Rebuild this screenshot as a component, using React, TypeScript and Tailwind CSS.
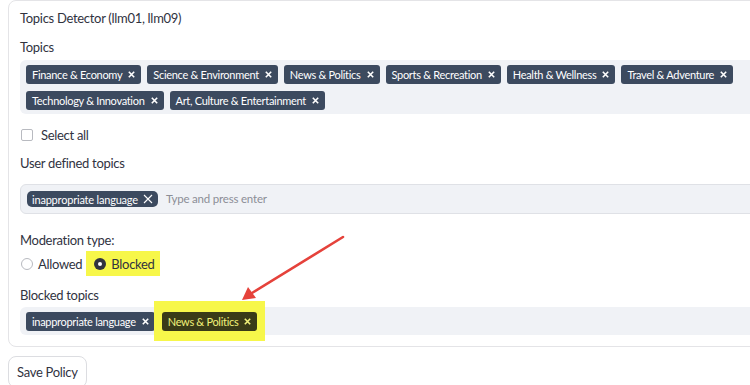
import React from "react";

const font = { fontFamily: 'Lato, "Noto Sans", sans-serif' };

function XIcon({ color }: { color: string }) {
  return (
    <svg className="ml-[6px]" width="7" height="7" viewBox="0 0 7 7">
      <path d="M0.8 0.8 L6.2 6.2 M6.2 0.8 L0.8 6.2" stroke={color} strokeWidth="1.6" fill="none" />
    </svg>
  );
}

function Tag({ label, hl = false }: { label: string; hl?: boolean }) {
  return (
    <span
      className={
        "inline-flex items-center h-[19px] rounded-[3px] px-[6px] text-[11px] tracking-[-0.3px] leading-none whitespace-nowrap " +
        (hl ? "bg-[#3a3b18] text-[#f1f17a]" : "bg-[#3c4a5f] text-white")
      }
    >
      {label}
      <XIcon color={hl ? "#f1f17a" : "#ffffff"} />
    </span>
  );
}

export default function App() {
  const topics1 = [
    "Finance & Economy",
    "Science & Environment",
    "News & Politics",
    "Sports & Recreation",
    "Health & Wellness",
    "Travel & Adventure",
  ];
  const topics2 = ["Technology & Innovation", "Art, Culture & Entertainment"];
  const label = "text-[13px] tracking-[-0.3px] leading-[20px]";
  return (
    <div className="relative w-[750px] h-[385px] overflow-hidden bg-white text-[#31333f]" style={font}>
      <div className="ml-[8px] w-[800px] h-[347px] border border-[#e4e4e7] rounded-[8px] pl-[11px] flex flex-col">
        <div className={"mt-[7px] h-[20px] " + label}>Topics Detector (llm01, llm09)</div>
        <div className={"mt-[9px] h-[20px] " + label}>Topics</div>
        <div className="mt-[3px] h-[54px] bg-[#f0f2f6] rounded-[6px] pl-[6px] pt-[5px] flex flex-col gap-[7px]">
          <div className="flex gap-[6px]">
            {topics1.map((t) => (
              <Tag key={t} label={t} />
            ))}
          </div>
          <div className="flex gap-[6px]">
            {topics2.map((t) => (
              <Tag key={t} label={t} />
            ))}
          </div>
        </div>
        <div className="mt-[13px] h-[16px] flex items-center">
          <span className="ml-[1px] w-[12px] h-[12px] border border-[#b8bac0] rounded-[2px] bg-white"></span>
          <span className={"ml-[8px] " + label}>Select all</span>
        </div>
        <div className={"mt-[10px] h-[20px] " + label}>User defined topics</div>
        <div className="mt-[11px] h-[30px] bg-[#f0f2f6] border border-[#dfe1e6] rounded-[6px] pl-[6px] flex items-center">
          <span className="inline-flex items-center h-[16px] rounded-[5px] bg-[#3c4a5f] text-white pl-[5px] pr-[5px] text-[11px] tracking-[-0.2px] leading-none whitespace-nowrap">
            inappropriate language
            <svg className="ml-[5px]" width="10" height="10" viewBox="0 0 10 10">
              <path d="M1 1 L9 9 M9 1 L1 9" stroke="white" strokeWidth="1.1" fill="none" />
            </svg>
          </span>
          <span className="ml-[8px] text-[11.5px] tracking-[-0.2px] text-[#8c8e96]">Type and press enter</span>
        </div>
        <div className={"mt-[16px] h-[20px] " + label}>Moderation type:</div>
        <div className="mt-[1px] h-[25px] flex items-center">
          <span className="ml-[1px] w-[12px] h-[12px] border border-[#b8bac0] rounded-full bg-white"></span>
          <span className={"ml-[5px] " + label}>Allowed</span>
          <div className="ml-[4px] h-[25px] bg-[#f7f74a] flex items-center pl-[8px] pr-[5px]">
            <span className="w-[12px] h-[12px] rounded-full bg-[#31333f] flex items-center justify-center">
              <span className="w-[4px] h-[4px] rounded-full bg-white"></span>
            </span>
            <span className={"ml-[5px] " + label}>Blocked</span>
          </div>
        </div>
        <div className={"mt-[9px] h-[20px] " + label}>Blocked topics</div>
        <div className="mt-[2px] h-[28px] bg-[#f0f2f6] rounded-[6px] pl-[6px] flex items-center">
          <Tag label="inappropriate language" />
          <div className="ml-[-1px] h-[40px] bg-[#f7f74a] flex items-center px-[8px]">
            <Tag label="News & Politics" hl />
          </div>
        </div>
      </div>
      <button className={"mt-[9px] ml-[8px] h-[32px] px-[8px] border border-[#dcdde1] rounded-[8px] bg-white text-[#31333f] " + label}>
        Save Policy
      </button>
      <svg className="absolute left-0 top-0 pointer-events-none" width="750" height="385">
        <line x1="343" y1="237" x2="252" y2="293" stroke="#e5423b" strokeWidth="2.6" strokeLinecap="round" />
        <path d="M242 300 L248 287 L256 298 Z" fill="#e5423b" />
      </svg>
    </div>
  );
}
